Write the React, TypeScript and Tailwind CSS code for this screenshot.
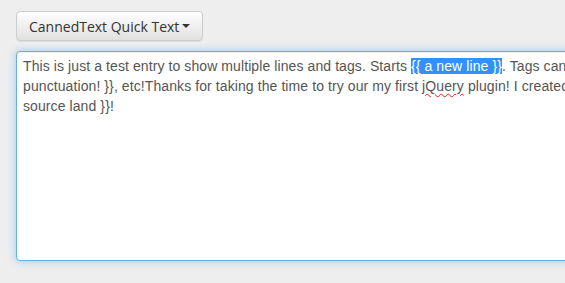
import React from 'react';

export default function App() {
  return (
    <div className="min-h-[283px] w-[565px] overflow-hidden bg-[#eeeeee] px-4 pt-[11px] pb-[22px]">
      {/* Dropdown button */}
      <button
        type="button"
        className="flex h-[30px] items-center rounded-[4px] border border-[#cccccc] bg-gradient-to-b from-white to-[#e0e0e0] px-3 text-[14px] text-[#333333] shadow-[inset_0_1px_0_rgba(255,255,255,0.15),0_1px_1px_rgba(0,0,0,0.075)]"
        style={{ fontFamily: '"Open Sans", "Noto Sans", sans-serif' }}
      >
        CannedText Quick Text
        <span className="ml-[3px] inline-block h-0 w-0 border-x-[4px] border-t-[4px] border-x-transparent border-t-[#333333]" />
      </button>

      {/* Editor (focused textarea look) */}
      <div
        className="mt-[10px] h-[210px] w-[640px] overflow-hidden rounded-[4px] border border-[#66afe9] bg-white px-[6px] pt-[4px] text-[14px] leading-[20px] tracking-[0.09px] text-[#555555] shadow-[inset_0_1px_1px_rgba(0,0,0,0.075),0_0_8px_rgba(102,175,233,0.6)]"
        style={{ fontFamily: '"Liberation Sans", Arial, sans-serif' }}
      >
        <div className="whitespace-nowrap">
          This is just a test entry to show multiple lines and tags. Starts{' '}
          <span className="bg-[#3390ff] text-white">{'{{ a new line }}'}</span>. Tags can {'{{ contain'}
        </div>
        <div className="whitespace-nowrap">
          punctuation! {'}}'}, etc!Thanks for taking the time to try our my first{' '}
          <span className="underline decoration-wavy decoration-[#e02020] decoration-1 underline-offset-2">jQuery</span>{' '}
          plugin! I created {'{{ this in open'}
        </div>
        <div className="whitespace-nowrap">source land {'}}'}!</div>
      </div>
    </div>
  );
}
